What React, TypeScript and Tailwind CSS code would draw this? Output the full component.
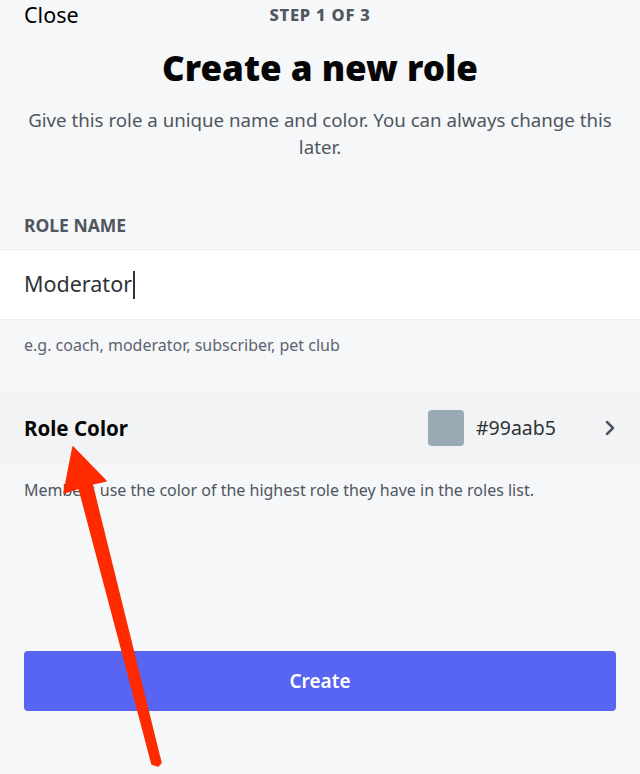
import React from 'react'

function Arrow() {
  // red annotation arrow drawn over the screenshot
  return (
    <svg className="absolute inset-0 pointer-events-none" width="640" height="774" viewBox="0 0 640 774">
      <polygon
        points="73,447 106,481 92,484 161,763 158,766 152,764 79,488 64,493"
        fill="#ff2a00"
        stroke="#ff2a00"
        strokeWidth="1.5"
        strokeLinejoin="round"
      />
    </svg>
  )
}

export default function App() {
  return (
    <div className="relative w-[640px] h-[774px] overflow-hidden bg-[#f6f7f8] font-['Noto_Sans',sans-serif] text-[#060607]">
      <div className="grid grid-cols-3 items-center px-6 h-[30px]">
        <span className="text-[21.5px] leading-none text-black">Close</span>
        <span className="text-center text-[16.5px] font-extrabold tracking-[0.8px] text-[#4f5660] whitespace-nowrap">STEP 1 OF 3</span>
        <span />
      </div>

      <h1 className="mt-[16px] text-center text-[35px] leading-[44px] font-black text-[#060607]">Create a new role</h1>
      <p className="mt-[16px] px-6 text-center text-[18.7px] leading-[27px] text-[#4f5660]">
        Give this role a unique name and color. You can always change this later.
      </p>

      <div className="mt-[55px] px-6 text-[17.5px] leading-[20px] font-bold text-[#4f5660]">ROLE NAME</div>
      <div className="mt-[14px] h-[71px] bg-white border-y border-[#ebedef] px-6 flex items-center">
        <span className="text-[21.5px] text-[#2e3338]">Moderator</span>
        <span className="ml-[1px] w-[2px] h-[28px] bg-[#2e3338]" />
      </div>
      <div className="mt-[15px] px-6 text-[16px] leading-[20px] text-[#5c6470]">e.g. coach, moderator, subscriber, pet club</div>

      <div className="mt-[38px] h-[70px] bg-[#f2f3f5] px-6 flex items-center">
        <span className="flex-1 text-[20.5px] font-bold text-[#060607]">Role Color</span>
        <span className="w-[36px] h-[36px] rounded-[4px] bg-[#99aab5]" />
        <span className="ml-[12px] w-[80px] text-[19.5px] text-[#2e3338]">#99aab5</span>
        <svg className="ml-[48px]" width="12" height="18" viewBox="0 0 12 18">
          <path d="M3 3 L9 9 L3 15" fill="none" stroke="#4f5660" strokeWidth="2.5" strokeLinecap="round" strokeLinejoin="round" />
        </svg>
      </div>
      <div className="mt-[17px] px-6 text-[16px] leading-[20px] text-[#4f5660]">
        Members use the color of the highest role they have in the roles list.
      </div>

      <div className="mt-[151px] px-6">
        <button className="w-full h-[60px] rounded-[4px] bg-[#5865f2] text-white text-[19px] font-semibold">Create</button>
      </div>

      <Arrow />
    </div>
  )
}
